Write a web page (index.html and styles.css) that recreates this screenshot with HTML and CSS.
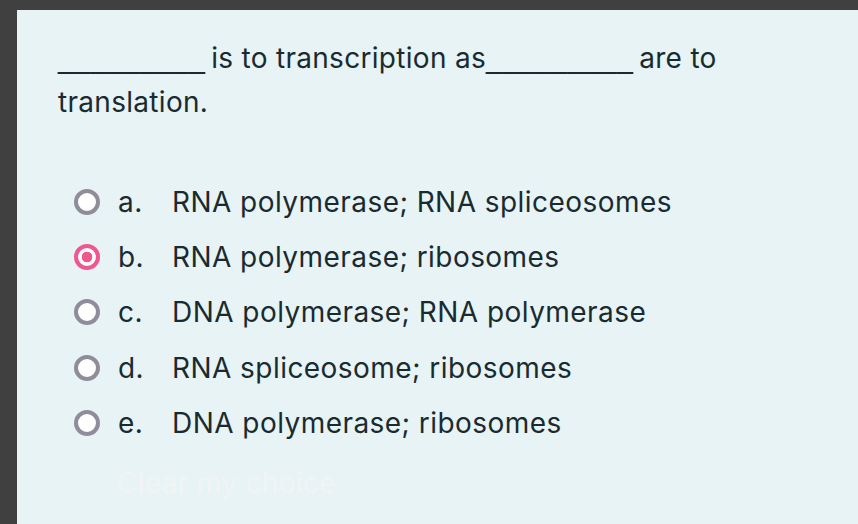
FILE: index.html
```html
<!DOCTYPE html>
<html>
<head>
<meta charset="utf-8">
<link rel="stylesheet" href="styles.css">
</head>
<body>
<div class="panel">
  <p class="question"><span class="blank">_________</span> <span class="seg">is to transcription as</span><span class="blank">_________</span> <span class="seg">are to</span> <span class="seg">translation.</span></p>
  <div class="answers">
    <label class="opt"><span class="radio"></span><span class="letter">a.</span><span class="txt">RNA polymerase; RNA spliceosomes</span></label>
    <label class="opt"><span class="radio checked"></span><span class="letter">b.</span><span class="txt">RNA polymerase; ribosomes</span></label>
    <label class="opt"><span class="radio"></span><span class="letter">c.</span><span class="txt">DNA polymerase; RNA polymerase</span></label>
    <label class="opt"><span class="radio"></span><span class="letter">d.</span><span class="txt">RNA spliceosome; ribosomes</span></label>
    <label class="opt"><span class="radio"></span><span class="letter">e.</span><span class="txt">DNA polymerase; ribosomes</span></label>
  </div>
  <div class="clear">Clear my choice</div>
</div>
</body>
</html>
```
FILE: styles.css
```css
html, body {
  margin: 0;
  padding: 0;
  background: #404040;
  height: 100%;
  overflow: hidden;
}
body {
  padding: 10px 0 0 17px;
  box-sizing: border-box;
  font-family: Inter, "Noto Sans", sans-serif;
  color: #1a2b30;
}
.panel {
  background: #e7f3f5;
  height: 100%;
  padding: 26px 0 0 41px;
  box-sizing: border-box;
}
.question {
  margin: 0;
  font-size: 28px;
  line-height: 44px;
  letter-spacing: 0.3px;
  width: 700px;
}
.seg {
  white-space: nowrap;
}
.blank {
  font-family: "Liberation Sans", Arial, sans-serif;
  font-size: 29px;
  line-height: 28px;
  letter-spacing: 0.2px;
  margin-right: -2px;
}
.answers {
  margin-top: 50px;
  display: flex;
  flex-direction: column;
}
.opt {
  display: flex;
  align-items: center;
  height: 55.3px;
  font-size: 28px;
  letter-spacing: 0.45px;
  margin-left: 16px;
}
.radio {
  width: 26px;
  height: 26px;
  border: 4px solid #8f8d99;
  border-radius: 50%;
  background: #fff;
  box-sizing: border-box;
  flex: none;
}
.radio.checked {
  border-color: #f0568f;
  background: radial-gradient(circle, #f0568f 0 5px, #fff 5.6px);
}
.letter {
  margin-left: 18px;
  width: 54px;
}
.clear {
  margin: 16px 0 0 59px;
  font-size: 28px;
  letter-spacing: 0.3px;
  color: #f2f4f4;
}
```
